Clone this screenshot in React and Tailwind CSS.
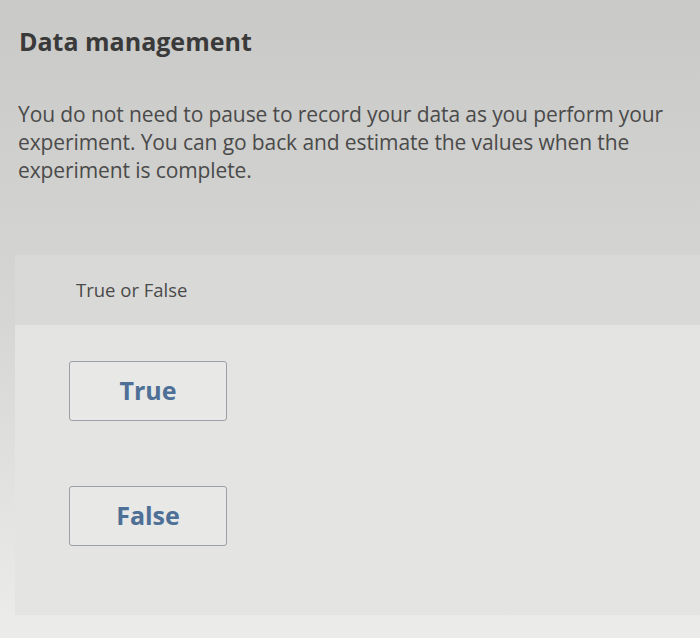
export default function App() {
  return (
    <div
      className="w-[700px] h-[638px] overflow-hidden bg-gradient-to-b from-[#c9c9c7] via-[#d6d6d4] to-[#ececea] text-[#474747]"
      style={{ fontFamily: '"Open Sans", Lato, sans-serif' }}
    >
      <div className="pt-[24px] pl-[19px]">
        <h1 className="text-[25px] leading-[34px] font-bold text-[#3a3a3a]">Data management</h1>
      </div>

      <p className="mt-[42px] ml-[18px] pr-[20px] text-[21px] leading-[28px] tracking-[-0.1px] text-[#4a4a4a]">
        You do not need to pause to record your data as you perform your experiment. You can go back
        and estimate the values when the experiment is complete.
      </p>

      <div className="mt-[71px] ml-[15px]">
        <div className="h-[70px] bg-[#d9d9d7] pl-[61px] pt-[22px]">
          <span className="text-[18.5px] leading-[26px] text-[#4a4a4a]">True or False</span>
        </div>
        <div className="h-[290px] bg-[#e4e4e2] pl-[54px] pt-[36px] flex flex-col gap-[65px]">
          <button className="w-[158px] h-[60px] rounded-[3px] border border-[#9aa0a6] bg-[#e8e8e6] text-[25px] font-bold text-[#4e6f96]">
            True
          </button>
          <button className="w-[158px] h-[60px] rounded-[3px] border border-[#9aa0a6] bg-[#e8e8e6] text-[25px] font-bold text-[#4e6f96]">
            False
          </button>
        </div>
      </div>
    </div>
  )
}
